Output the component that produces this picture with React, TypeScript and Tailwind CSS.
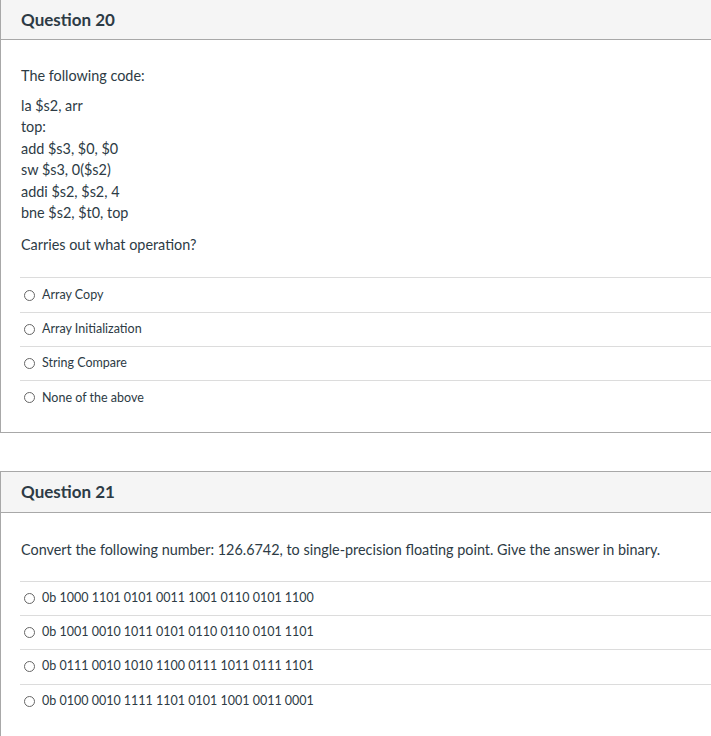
const codeLines = [
  'la $s2, arr',
  'top:',
  'add $s3, $0, $0',
  'sw $s3, 0($s2)',
  'addi $s2, $s2, 4',
  'bne $s2, $t0, top',
];

const q20Answers = ['Array Copy', 'Array Initialization', 'String Compare', 'None of the above'];

const q21Answers = [
  '0b 1000 1101 0101 0011 1001 0110 0101 1100',
  '0b 1001 0010 1011 0101 0110 0110 0101 1101',
  '0b 0111 0010 1010 1100 0111 1011 0111 1101',
  '0b 0100 0010 1111 1101 0101 1001 0011 0001',
];

function Answer({ label }: { label: string }) {
  return (
    <div className="flex h-[34.3px] items-center border-t border-[#dcdcdc] pl-[4px]">
      <span className="h-[11px] w-[11px] shrink-0 rounded-full border border-[#666] bg-white" />
      <span className="ml-[7px] text-[12.5px] text-[#2d3b45]">{label}</span>
    </div>
  );
}

function Header({ title, top }: { title: string; top?: boolean }) {
  return (
    <div
      className={
        top
          ? 'flex h-[40px] items-center border-b border-[#a8a8a8] bg-[#f5f5f5] px-5'
          : 'flex h-[42px] items-center border-y border-[#a8a8a8] bg-[#f5f5f5] px-5'
      }
    >
      <h2 className="text-[17px] font-bold text-[#2d3b45]">{title}</h2>
    </div>
  );
}

export default function App() {
  return (
    <div className="min-h-screen bg-white font-['Lato',sans-serif] text-[14.4px] text-[#2d3b45]">
      <section className="border-b border-l border-[#a8a8a8]">
        <Header title="Question 20" top />
        <div className="pb-[17px] pl-[19px] pt-[25px]">
          <p className="pl-px pr-5 leading-[21px]">The following code:</p>
          <div className="mt-[9px] pl-px leading-[21.4px]">
            {codeLines.map((l) => (
              <p key={l}>{l}</p>
            ))}
          </div>
          <p className="mt-[11px] pl-px leading-[21px]">Carries out what operation?</p>
          <div className="mt-[22px]">
            {q20Answers.map((a) => (
              <Answer key={a} label={a} />
            ))}
          </div>
        </div>
      </section>

      <section className="mt-[38px] border-l border-[#a8a8a8] pb-10">
        <Header title="Question 21" />
        <div className="pl-[19px] pt-[26px]">
          <p className="pl-px pr-5 leading-[21px]">
            Convert the following number: 126.6742, to single-precision floating point. Give the answer in binary.
          </p>
          <div className="mt-[21px]">
            {q21Answers.map((a) => (
              <Answer key={a} label={a} />
            ))}
          </div>
        </div>
      </section>
    </div>
  );
}
